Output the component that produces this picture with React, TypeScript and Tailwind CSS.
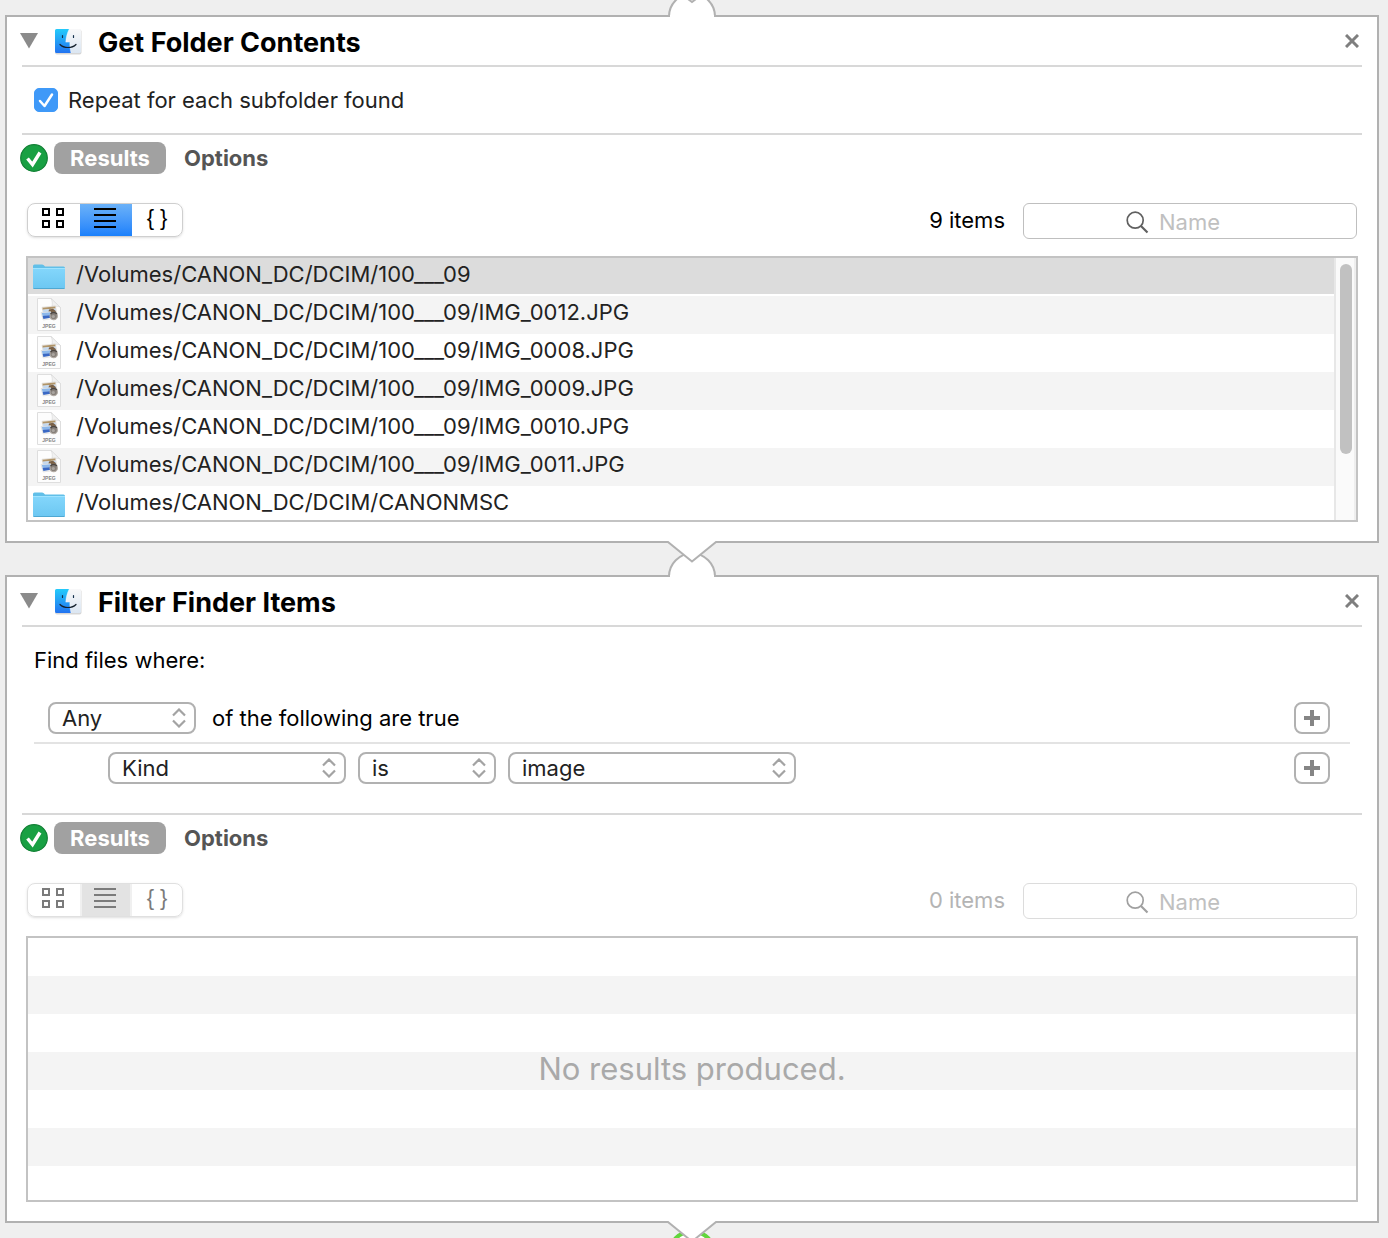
import { useState, type ReactNode } from "react";

function FinderIcon() {
  return (
    <svg width="28" height="28" viewBox="0 0 28 28" aria-hidden="true">
      <defs>
        <linearGradient id="finderBlue" x1="0" y1="0" x2="0" y2="1">
          <stop offset="0" stopColor="#24cbfb" />
          <stop offset="1" stopColor="#2273f0" />
        </linearGradient>
        <linearGradient id="finderWhite" x1="0" y1="0" x2="0" y2="1">
          <stop offset="0" stopColor="#f8f8f9" />
          <stop offset="1" stopColor="#dbe6f2" />
        </linearGradient>
      </defs>
      <rect x="1" y="2.5" width="26.5" height="25" rx="2" fill="#000" opacity="0.16" />
      <rect x="1" y="2" width="26" height="24" rx="1.5" fill="url(#finderWhite)" />
      <path d="M2.500 2H15.200C13 6.500 12 10.500 11.800 15H15.800C15.800 19 16.100 22.500 17 26H2.500Q1 26 1 24.500V3.500Q1 2 2.500 2Z" fill="url(#finderBlue)" />
      <path d="M15.200 2C13 6.500 12 10.500 11.800 15.200H15.800C15.800 19 16.100 22.500 17 26" fill="none" stroke="#fff" strokeOpacity="0.55" strokeWidth="0.7" />
      <path d="M8.500 8.500V10.500M19.500 8.500V10.500" stroke="#14304c" strokeWidth="1.200" strokeLinecap="round" />
      <path d="M6 17.500C10 21.500 18 21.500 22 17.500" fill="none" stroke="#14202c" strokeWidth="1.200" strokeLinecap="round" />
    </svg>
  );
}

function FolderIcon() {
  return (
    <svg width="32" height="26" viewBox="0 0 32 26" aria-hidden="true">
      <defs>
        <linearGradient id="folderFront" x1="0" y1="0" x2="0" y2="1">
          <stop offset="0" stopColor="#83d6fb" />
          <stop offset="1" stopColor="#6cc7f2" />
        </linearGradient>
      </defs>
      <path d="M0 5V2Q0 .5 1.500 .5H9Q10 .5 10.800 1.300L12 2.500H30.500Q32 2.500 32 4V8H0Z" fill="#61bfe8" />
      <path d="M0 4.500H32V23.500Q32 25 30.500 25H1.500Q0 25 0 23.500Z" fill="url(#folderFront)" />
      <path d="M0 4.500H32" stroke="#9fe3ff" />
      <path d="M.5 24.500H31.500" stroke="#4fa8d2" />
    </svg>
  );
}

function JpegIcon() {
  return (
    <svg width="32" height="34" viewBox="0 0 32 34" aria-hidden="true">
      <path d="M4.500 .5H18L27.500 9.500V32.500H4.500Z" fill="#fdfdfd" stroke="#dedede" />
      <path d="M18 .5C19.500 3 19.500 6 19 8.500C22.500 8 26 8 27.500 9.500Z" fill="#f1f1f1" stroke="#d6d6d6" strokeWidth=".6" />
      <path d="M9 9.300L22.500 8L24 16.500L11 18.500Z" fill="#f4f0ea" stroke="#cfc9c0" strokeWidth=".5" />
      <path d="M9.500 9.800L22.200 8.600L22.500 10.500L9.800 11.700Z" fill="#b09468" />
      <path d="M9.800 11.700L22.500 10.500L23.300 15.800L11 17.500Z" fill="#c3d9f1" />
      <path d="M16 11.500L20 10.800L22.800 13V15.800L15 16.500Z" fill="#7b6146" />
      <path d="M8 14.500L17.500 13.500L20 20.500L10.200 22Z" fill="#f8f8f6" stroke="#cfcfcf" strokeWidth=".5" />
      <path d="M8.800 15L17.200 14.200L18.300 17.200L9.600 18.300Z" fill="#8cb7ea" />
      <path d="M9.600 18L18.300 17L19.200 19.600L10.400 21Z" fill="#3a68c4" />
      <circle cx="20.700" cy="18" r="3.700" fill="#87807a" stroke="#b3aca5" strokeWidth="1.100" />
      <path d="M17.600 16.200C18.500 14.200 22.500 13.800 23.800 16" fill="none" stroke="#4c4642" strokeWidth="1.500" />
      <circle cx="20.300" cy="18.500" r="1.600" fill="#aaa5a0" />
      <text x="16" y="30" textAnchor="middle" fontFamily="Liberation Sans, sans-serif" fontWeight="700" fontSize="5" fill="#858585">JPEG</text>
    </svg>
  );
}

function StatusIcon() {
  return (
    <svg width="28" height="28" viewBox="0 0 28 28" role="img" aria-label="Completed">
      <circle cx="14" cy="14" r="13.300" fill="#18a043" stroke="#128035" strokeWidth="1.200" />
      <path d="M7.500 14.500L12.500 20.500L20 8.500" fill="none" stroke="#fff" strokeWidth="3.400" />
    </svg>
  );
}

function GridIcon() {
  return (
    <svg width="22" height="20" viewBox="0 0 22 20" fill="none" stroke="currentColor" strokeWidth="2" aria-hidden="true">
      <rect x="1" y="1" width="6" height="6" />
      <rect x="15" y="1" width="6" height="6" />
      <rect x="1" y="13" width="6" height="6" />
      <rect x="15" y="13" width="6" height="6" />
    </svg>
  );
}

function LinesIcon() {
  return (
    <svg width="22" height="20" viewBox="0 0 22 20" stroke="currentColor" strokeWidth="2" aria-hidden="true">
      <path d="M0 1H22M0 7H22M0 13H22M0 19H22" />
    </svg>
  );
}

function InputConnector({ green = false }: { green?: boolean }) {
  return (
    <svg className="absolute -top-[26px] left-1/2 -translate-x-1/2" width="52" height="28" viewBox="0 0 52 28" aria-hidden="true">
      <path
        d="M3 26V25.500A23 23 0 0 1 49 25.500V26"
        fill="#fff"
        stroke={green ? "#62d63c" : "#b1b1b1"}
        strokeWidth={green ? 4 : 2}
      />
      {!green && <rect x="4" y="24" width="44" height="4" fill="#fff" />}
    </svg>
  );
}

function OutputConnector() {
  return (
    <svg className="absolute -bottom-[22px] left-1/2 z-10 -translate-x-1/2" width="52" height="24" viewBox="0 0 52 24" aria-hidden="true">
      <path d="M2 0V3L26 22.500L50 3V0Z" fill="#fff" />
      <path d="M0 3H2L26 22.500L50 3H52" fill="none" stroke="#b1b1b1" strokeWidth="2" />
    </svg>
  );
}

function Panel({ title, children }: { title: string; children: ReactNode }) {
  return (
    <section className="relative border-2 border-[#b1b1b1] bg-white pb-[19px]">
      <InputConnector />
      <header className="mx-[15px] flex h-[50px] items-center border-b-2 border-[#d8d8d8]">
        <button aria-label={"Collapse " + title} className="mr-4 -ml-0.5">
          <svg width="18" height="16" viewBox="0 0 18 16" aria-hidden="true">
            <path d="M0 0H18L9 15.500Z" fill="#8b8b8b" />
          </svg>
        </button>
        <FinderIcon />
        <h2 className="ml-4 pt-[3px] text-[27px] leading-8 font-bold text-black">{title}</h2>
        <button aria-label={"Remove " + title} className="mr-[3px] ml-auto">
          <svg width="14" height="14" viewBox="0 0 14 14" stroke="#7f7f7f" strokeWidth="3" aria-hidden="true">
            <path d="M1 1L13 13M13 1L1 13" />
          </svg>
        </button>
      </header>
      {children}
      <OutputConnector />
    </section>
  );
}

function Tabs() {
  return (
    <div className="ml-[13px] flex h-8 items-center text-[22px] leading-8 font-bold">
      <StatusIcon />
      <button className="ml-1.5 h-8 w-28 rounded-lg bg-[#a1a1a1] text-center text-white">Results</button>
      <button className="ml-[18px] text-[#555]">Options</button>
    </div>
  );
}

function Toolbar({ count, disabled = false }: { count: string; disabled?: boolean }) {
  return (
    <div className="mx-5 mt-[29px] flex h-9 items-start">
      <div
        className={
          disabled
            ? "flex h-[34px] w-[156px] overflow-hidden rounded-lg border border-[#e0e0e0] text-[#7b7b7b] shadow-sm"
            : "flex h-[34px] w-[156px] overflow-hidden rounded-lg border border-[#cfcfcf] text-black shadow-sm"
        }
      >
        <button aria-label="Icon view" disabled={disabled} className="flex w-[52px] items-start justify-center pt-1 pr-0.5">
          <GridIcon />
        </button>
        <button
          aria-label="List view"
          disabled={disabled}
          className={
            disabled
              ? "flex w-[52px] items-start justify-center border-x-2 border-[#f0f0f0] bg-[#e3e3e3] pt-1 pr-0.5"
              : "-my-px flex w-[52px] items-start justify-center bg-linear-to-b from-[#6db3f8] to-[#157efb] pt-[5px] pr-0.5"
          }
        >
          <LinesIcon />
        </button>
        <button aria-label="Text view" disabled={disabled} className="flex flex-1 justify-center gap-1.5 font-[Liberation_Sans] text-[22px] leading-[27px]">
          <span>{"{"}</span>
          <span>{"}"}</span>
        </button>
      </div>
      <p className={disabled ? "mr-[18px] ml-auto text-[22px] leading-[34px] text-[#b4b4b4]" : "mr-[18px] ml-auto text-[22px] leading-[34px] text-black"}>{count}</p>
      <div className="relative">
        <svg className="absolute top-2 left-[103px]" width="23" height="23" viewBox="0 0 23 23" fill="none" stroke={disabled ? "#a0a0a0" : "#606060"} strokeWidth="1.700" aria-hidden="true">
          <circle cx="9.200" cy="9.200" r="8" />
          <path d="M15 15L21.500 21.500" strokeWidth="2.200" />
        </svg>
        <input
          aria-label="Filter by name"
          disabled={disabled}
          placeholder="Name"
          className={
            disabled
              ? "block h-9 w-[334px] rounded-md border border-[#dcdcdc] bg-white pt-0.5 pl-[135px] text-[22px] placeholder:text-[#c0c0c0]"
              : "block h-9 w-[334px] rounded-md border border-[#bfbfbf] bg-white pt-0.5 pl-[135px] text-[22px] placeholder:text-[#c0c0c0]"
          }
        />
      </div>
    </div>
  );
}

const files = [
  { path: "/Volumes/CANON_DC/DCIM/100___09", folder: true },
  { path: "/Volumes/CANON_DC/DCIM/100___09/IMG_0012.JPG", folder: false },
  { path: "/Volumes/CANON_DC/DCIM/100___09/IMG_0008.JPG", folder: false },
  { path: "/Volumes/CANON_DC/DCIM/100___09/IMG_0009.JPG", folder: false },
  { path: "/Volumes/CANON_DC/DCIM/100___09/IMG_0010.JPG", folder: false },
  { path: "/Volumes/CANON_DC/DCIM/100___09/IMG_0011.JPG", folder: false },
  { path: "/Volumes/CANON_DC/DCIM/CANONMSC", folder: true },
];

function FileList() {
  return (
    <div className="mx-[19px] mt-[17px] flex h-[266px] overflow-hidden border-2 border-[#c3c3c3]">
      <ul className="min-w-0 flex-1 text-[22px] text-[#222]">
        {files.map((file, i) => (
          <li
            key={file.path}
            className={
              i === 0
                ? "flex h-[38px] items-start border-b-2 border-white bg-[#dcdcdc] pl-[5px]"
                : "flex h-[38px] items-start pl-[5px] even:bg-[#f4f4f4]"
            }
          >
            <span className="flex h-[38px] w-8 items-center">{file.folder ? <FolderIcon /> : <JpegIcon />}</span>
            <span className="ml-[11px] leading-8">{file.path}</span>
          </li>
        ))}
      </ul>
      <div className="w-[22px] border-x-2 border-r-[#eeeeee] border-l-[#e7e7e7] bg-[#fafafa] px-1 pt-1.5">
        <div className="h-[190px] w-3 rounded-full bg-[#c1c1c1]" />
      </div>
    </div>
  );
}

function PopUp({ label, value, options, width }: { label: string; value: string; options: string[]; width: string }) {
  return (
    <div className={"relative " + width}>
      <select
        aria-label={label}
        defaultValue={value}
        className="block h-8 w-full appearance-none rounded-lg border-2 border-[#b1b1b1] bg-white pl-3 text-[22px] leading-7 text-[#222]"
      >
        {options.map((option) => (
          <option key={option}>{option}</option>
        ))}
      </select>
      <svg className="pointer-events-none absolute top-1.5 right-2.5" width="14" height="20" viewBox="0 0 14 20" fill="none" stroke="#a3a3a3" strokeWidth="2.200" aria-hidden="true">
        <path d="M1 7.500L7 1.500L13 7.500M1 12.500L7 18.500L13 12.500" />
      </svg>
    </div>
  );
}

function AddButton({ label }: { label: string }) {
  return (
    <button aria-label={label} className="ml-auto flex h-8 w-9 items-center justify-center rounded-lg border-2 border-[#b1b1b1] bg-white">
      <svg width="16" height="16" viewBox="0 0 16 16" stroke="#858585" strokeWidth="4" aria-hidden="true">
        <path d="M8 0V16M0 8H16" />
      </svg>
    </button>
  );
}

export default function App() {
  const [repeat, setRepeat] = useState(true);
  return (
    <main className="flex min-h-screen flex-col gap-8 overflow-hidden bg-[#efefef] pt-[15px] pr-[9px] pl-[5px] font-[Inter,sans-serif]">
      <div className="relative -mb-8">
        <svg className="absolute -top-[15px] left-1/2 z-10 -translate-x-1/2" width="12" height="4" viewBox="0 0 12 4" aria-hidden="true">
          <path d="M2 -1L6 2L10 -1" fill="none" stroke="#b1b1b1" strokeWidth="2" />
        </svg>
      </div>
      <Panel title="Get Folder Contents">
        <div className="mx-[15px] flex h-[68px] items-center border-b-2 border-[#d8d8d8] pl-3">
          <label className="relative flex items-center gap-2.5 text-[22px] leading-8 text-[#222]">
            <input
              type="checkbox"
              checked={repeat}
              onChange={(e) => setRepeat(e.target.checked)}
              className="size-6 appearance-none rounded-[5px] border border-[#b1b1b1] bg-white checked:border-[#3f99f8] checked:bg-[#3f99f8]"
            />
            {repeat && (
              <svg className="pointer-events-none absolute left-0" width="24" height="24" viewBox="0 0 24 24" fill="none" stroke="#fff" strokeWidth="2.500" strokeLinecap="round" strokeLinejoin="round" aria-hidden="true">
                <path d="M6 13L10.500 18L18 6.500" />
              </svg>
            )}
            Repeat for each subfolder found
          </label>
        </div>
        <div className="pt-[7px]">
          <Tabs />
          <Toolbar count="9 items" />
          <FileList />
        </div>
      </Panel>
      <Panel title="Filter Finder Items">
        <div className="mx-[15px] border-b-2 border-[#d8d8d8] pr-3 pb-[29px] pl-3 text-[22px] leading-8">
          <p className="pt-[17px]">Find files where:</p>
          <div className="mt-[26px] flex items-center border-b-2 border-[#e3e3e3] pr-5 pb-2 pl-3.5">
            <PopUp label="Match" value="Any" options={["Any", "All", "None"]} width="w-[148px]" />
            <span className="ml-4">of the following are true</span>
            <AddButton label="Add group condition" />
          </div>
          <div className="flex items-center gap-3 pt-2 pr-5 pl-[74px]">
            <PopUp label="Attribute" value="Kind" options={["Kind", "Name", "Size"]} width="w-[238px]" />
            <PopUp label="Comparison" value="is" options={["is", "is not"]} width="w-[138px]" />
            <PopUp label="Value" value="image" options={["image", "movie", "folder"]} width="w-72" />
            <AddButton label="Add condition" />
          </div>
        </div>
        <div className="pt-[7px]">
          <Tabs />
          <Toolbar count="0 items" disabled />
          <div className="mx-[19px] mt-[17px] flex h-[266px] items-center justify-center border-2 border-[#c3c3c3] bg-[repeating-linear-gradient(to_bottom,#fff_0_38px,#f4f4f4_38px_76px)]">
            <p className="text-[31px] leading-10 text-[#a9a9a9]">No results produced.</p>
          </div>
        </div>
      </Panel>
      <div className="relative h-0">
        <InputConnector green />
      </div>
    </main>
  );
}
